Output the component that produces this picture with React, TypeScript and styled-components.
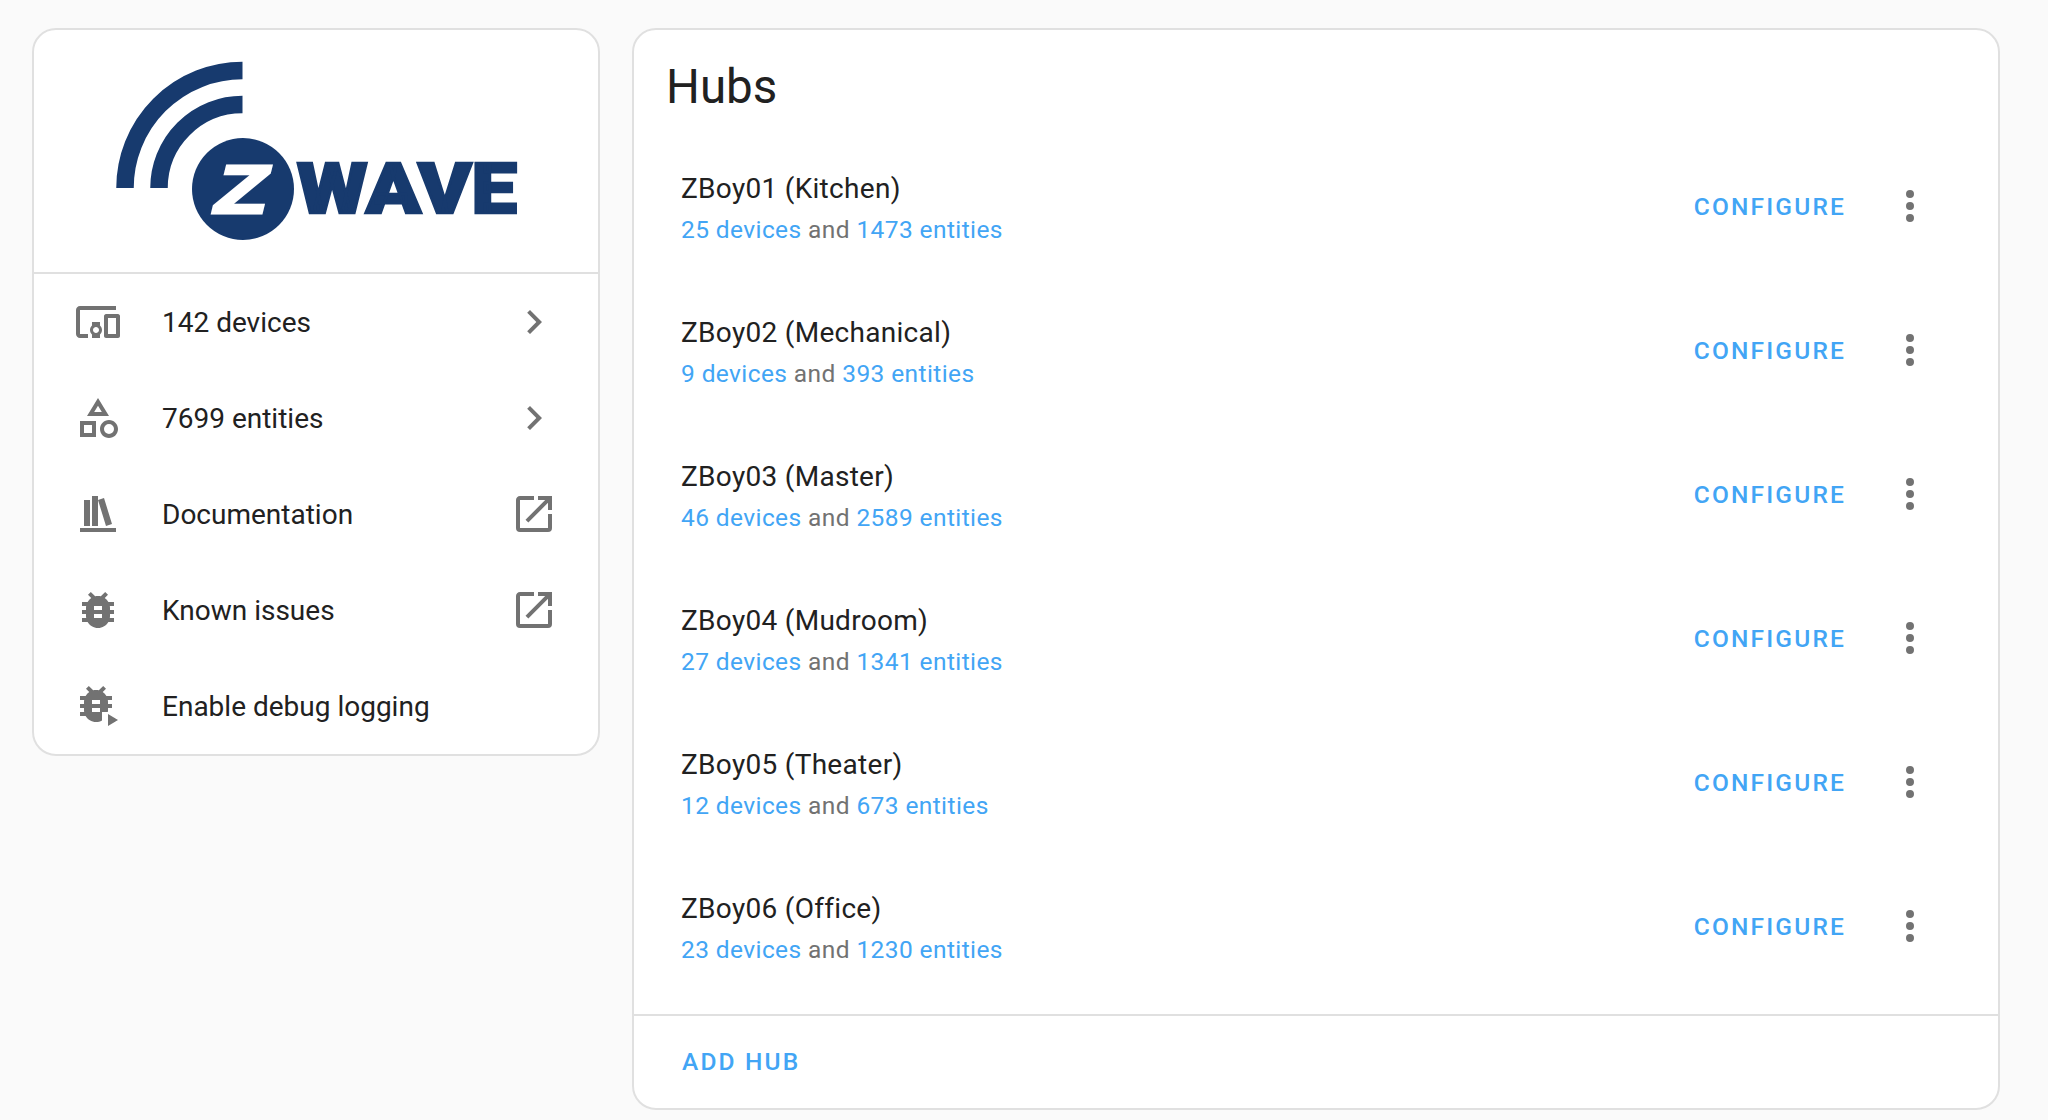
import React from 'react';
import styled, { createGlobalStyle } from 'styled-components';

const mdi = {
	devices:
		'M3 6H21V4H3C1.9 4 1 4.9 1 6V18C1 19.1 1.9 20 3 20H7V18H3V6M13 12H9V13.78C8.39 14.33 8 15.11 8 16C8 16.89 8.39 17.67 9 18.22V20H13V18.22C13.61 17.67 14 16.88 14 16S13.61 14.33 13 13.78V12M11 17.5C10.17 17.5 9.5 16.83 9.5 16S10.17 14.5 11 14.5 12.5 15.17 12.5 16 11.83 17.5 11 17.5M22 8H16C15.5 8 15 8.5 15 9V19C15 19.5 15.5 20 16 20H22C22.5 20 23 19.5 23 19V9C23 8.5 22.5 8 22 8M21 18H17V10H21V18Z',
	shapes:
		'M11,13.5V21.5H3V13.5H11M9,15.5H5V19.5H9V15.5M12,2L17.5,11H6.5L12,2M12,5.86L10.08,9H13.92L12,5.86M17.5,13C20,13 22,15 22,17.5C22,20 20,22 17.5,22C15,22 13,20 13,17.5C13,15 15,13 17.5,13M17.5,15A2.5,2.5 0 0,0 15,17.5A2.5,2.5 0 0,0 17.5,20A2.5,2.5 0 0,0 20,17.5A2.5,2.5 0 0,0 17.5,15Z',
	bookshelf: 'M9 3V18H12V3H9M12 5L16 18L19 17L15 4L12 5M5 5V18H8V5H5M3 19V21H21V19H3Z',
	bug: 'M14,12H10V10H14M14,16H10V14H14M20,8H17.19C16.74,7.22 16.12,6.55 15.37,6.04L17,4.41L15.59,3L13.42,5.17C12.96,5.06 12.5,5 12,5C11.5,5 11.04,5.06 10.59,5.17L8.41,3L7,4.41L8.62,6.04C7.88,6.55 7.26,7.22 6.81,8H4V10H6.09C6.04,10.33 6,10.66 6,11V12H4V14H6V15C6,15.34 6.04,15.67 6.09,16H4V18H6.81C7.85,19.79 9.78,21 12,21C14.22,21 16.15,19.79 17.19,18H20V16H17.91C17.96,15.67 18,15.34 18,15V14H20V12H18V11C18,10.66 17.96,10.33 17.91,10H20V8Z',
	bugPlay:
		'M19 7H16.19C15.74 6.2 15.12 5.5 14.37 5L16 3.41L14.59 2L12.42 4.17C11.96 4.06 11.5 4 11 4C10.5 4 10.05 4.06 9.59 4.17L7.41 2L6 3.41L7.62 5C6.87 5.5 6.26 6.21 5.81 7H3V9H5.09C5.03 9.33 5 9.66 5 10V11H3V13H5V14C5 14.34 5.03 14.67 5.09 15H3V17H5.81C6.85 18.79 8.78 20 11 20C12.1 20 13.1 19.7 14 19.2V15H16.91C16.97 14.67 17 14.34 17 14V13H19V11H17V10C17 9.66 16.97 9.33 16.91 9H19V7ZM13 15H9V13H13V15ZM13 11H9V9H13V11ZM17 16V22L22 19Z',
	chevron: 'M8.59,16.58L13.17,12L8.59,7.41L10,6L16,12L10,18L8.59,16.58Z',
	openInNew:
		'M14,3V5H17.59L7.76,14.83L9.17,16.24L19,6.41V10H21V3M19,19H5V5H12V3H5C3.89,3 3,3.9 3,5V19A2,2 0 0,0 5,21H19A2,2 0 0,0 21,19V12H19V19Z',
	dots: 'M12,16A2,2 0 0,1 14,18A2,2 0 0,1 12,20A2,2 0 0,1 10,18A2,2 0 0,1 12,16M12,10A2,2 0 0,1 14,12A2,2 0 0,1 12,14A2,2 0 0,1 10,12A2,2 0 0,1 12,10M12,4A2,2 0 0,1 14,6A2,2 0 0,1 12,8A2,2 0 0,1 10,6A2,2 0 0,1 12,4Z',
};

const menuItems = [
	{ label: '142 devices', icon: mdi.devices, trailing: mdi.chevron },
	{ label: '7699 entities', icon: mdi.shapes, trailing: mdi.chevron },
	{ label: 'Documentation', icon: mdi.bookshelf, trailing: mdi.openInNew },
	{ label: 'Known issues', icon: mdi.bug, trailing: mdi.openInNew },
	{ label: 'Enable debug logging', icon: mdi.bugPlay },
];

const hubs = [
	{ name: 'ZBoy01 (Kitchen)', devices: 25, entities: 1473 },
	{ name: 'ZBoy02 (Mechanical)', devices: 9, entities: 393 },
	{ name: 'ZBoy03 (Master)', devices: 46, entities: 2589 },
	{ name: 'ZBoy04 (Mudroom)', devices: 27, entities: 1341 },
	{ name: 'ZBoy05 (Theater)', devices: 12, entities: 673 },
	{ name: 'ZBoy06 (Office)', devices: 23, entities: 1230 },
];

const Icon: React.FC<{ path: string }> = ({ path }) => (
	<IconSvg viewBox="0 0 24 24">
		<path d={path} fillRule="evenodd" />
	</IconSvg>
);

const Logo: React.FC = () => (
	<LogoSvg viewBox="0 0 408 184">
		<g fill="none" stroke="#173a6e" strokeWidth="17.5">
			<path d="M9 128A117.5 117.5 0 0 1 126.5 10.5" />
			<path d="M43 128A83.500 83.500 0 0 1 126.500 44.500" />
		</g>
		<circle cx="127" cy="129" r="51" fill="#173a6e" />
		<LogoZ x="99" y="153" textLength="53" lengthAdjust="spacingAndGlyphs">
			Z
		</LogoZ>
		<LogoWord x="181" y="152.500" textLength="220" lengthAdjust="spacingAndGlyphs">
			WAVE
		</LogoWord>
	</LogoSvg>
);

const App: React.FC = () => {
	return (
		<Page>
			<GlobalStyle />
			<SideCard>
				<LogoBox>
					<Logo />
				</LogoBox>
				<Menu>
					{menuItems.map(({ label, icon, trailing }) => (
						<MenuRow key={label}>
							<MenuIcon>
								<Icon path={icon} />
							</MenuIcon>
							<MenuLabel>{label}</MenuLabel>
							{trailing && (
								<MenuIcon>
									<Icon path={trailing} />
								</MenuIcon>
							)}
						</MenuRow>
					))}
				</Menu>
			</SideCard>
			<HubsCard>
				<Title>Hubs</Title>
				<HubList>
					{hubs.map(({ name, devices, entities }) => (
						<HubRow key={name}>
							<HubInfo>
								<HubName>{name}</HubName>
								<HubMeta>
									<a>{devices} devices</a> and <a>{entities} entities</a>
								</HubMeta>
							</HubInfo>
							<TextButton>Configure</TextButton>
							<MoreButton>
								<Icon path={mdi.dots} />
							</MoreButton>
						</HubRow>
					))}
				</HubList>
				<Actions>
					<TextButton>Add hub</TextButton>
				</Actions>
			</HubsCard>
		</Page>
	);
};

const GlobalStyle = createGlobalStyle`
	html, body {
		margin: 0;
		height: 100%;
		background: #fafafa;
		overflow: hidden;
	}
	* {
		box-sizing: border-box;
	}
`;

const Page = styled.div`
	display: flex;
	align-items: flex-start;
	gap: 32px;
	height: 1120px;
	padding: 28px 48px 0 32px;
	background: #fafafa;
	font-family: Roboto, 'Liberation Sans', sans-serif;
`;

const Card = styled.section`
	background: #fff;
	border: 2px solid #e0e0e0;
	border-radius: 24px;
`;

const SideCard = styled(Card)`
	flex: 0 0 568px;
`;

const HubsCard = styled(Card)`
	flex: 1;
	height: 1082px;
`;

const LogoBox = styled.div`
	height: 244px;
	padding: 30px 0 0 82px;
	border-bottom: 2px solid #e0e0e0;
`;

const LogoSvg = styled.svg`
	display: block;
	width: 408px;
	height: 184px;
`;

const LogoZ = styled.text`
	font-family: 'Liberation Sans', sans-serif;
	font-size: 68px;
	font-weight: 700;
	font-style: italic;
	fill: #fff;
	stroke: #fff;
	stroke-width: 3px;
`;

const LogoWord = styled.text`
	font-family: Roboto, 'Liberation Sans', sans-serif;
	font-size: 71px;
	font-weight: 900;
	fill: #173a6e;
	stroke: #173a6e;
	stroke-width: 2.5px;
`;

const Menu = styled.div`
	display: flex;
	flex-direction: column;
`;

const MenuRow = styled.div`
	display: flex;
	align-items: center;
	height: 96px;
	padding: 0 40px;
`;

const MenuIcon = styled.span`
	display: block;
	width: 48px;
	height: 48px;
	color: #727272;
`;

const IconSvg = styled.svg`
	display: block;
	width: 100%;
	height: 100%;
	fill: currentColor;
`;

const MenuLabel = styled.span`
	flex: 1;
	margin-left: 40px;
	font-size: 28px;
	color: #212121;
`;

const Title = styled.h1`
	margin: 0;
	height: 104px;
	padding: 25px 0 0 32px;
	font-size: 47.5px;
	line-height: 64px;
	font-weight: 400;
	color: #212121;
`;

const HubList = styled.div`
	display: flex;
	flex-direction: column;
	padding-bottom: 16px;
	border-bottom: 2px solid #e0e0e0;
`;

const HubRow = styled.div`
	display: flex;
	align-items: center;
	height: 144px;
	padding: 0 64px 0 47px;
`;

const HubInfo = styled.div`
	flex: 1;
	padding-top: 7px;
`;

const HubName = styled.div`
	font-size: 28px;
	line-height: 40px;
	letter-spacing: 0.3px;
	color: #212121;
`;

const HubMeta = styled.div`
	margin-top: 1px;
	font-size: 24.5px;
	line-height: 40px;
	letter-spacing: 0.4px;
	color: #727272;

	a {
		color: #42a5f5;
	}
`;

const TextButton = styled.button`
	padding: 0;
	border: 0;
	background: none;
	font-family: inherit;
	font-size: 24.5px;
	font-weight: 500;
	letter-spacing: 2.17px;
	text-transform: uppercase;
	color: #42a5f5;
`;

const MoreButton = styled.span`
	display: block;
	width: 48px;
	height: 48px;
	margin-left: 40px;
	color: #727272;
`;

const Actions = styled.div`
	display: flex;
	align-items: center;
	height: 90px;
	padding: 1px 0 0 48px;
`;

export default App;
